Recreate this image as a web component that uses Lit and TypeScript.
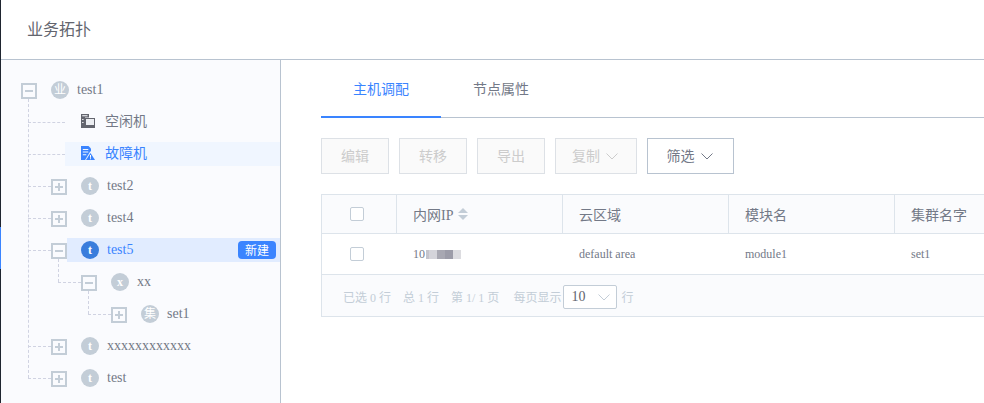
import { LitElement, html, css, svg } from "lit";
import { customElement } from "lit/decorators.js";

type Node = { depth: number; label: string; glyph?: string; toggle?: "plus" | "minus"; leaf?: "idle" | "fault"; state?: "active" | "fault" };

const NODES: Node[] = [
  { depth: 0, label: "test1", glyph: "业", toggle: "minus" },
  { depth: 1, label: "空闲机", leaf: "idle" },
  { depth: 1, label: "故障机", leaf: "fault", state: "fault" },
  { depth: 1, label: "test2", glyph: "t", toggle: "plus" },
  { depth: 1, label: "test4", glyph: "t", toggle: "plus" },
  { depth: 1, label: "test5", glyph: "t", toggle: "minus", state: "active" },
  { depth: 2, label: "xx", glyph: "x", toggle: "minus" },
  { depth: 3, label: "set1", glyph: "集", toggle: "plus" },
  { depth: 1, label: "xxxxxxxxxxxx", glyph: "t", toggle: "plus" },
  { depth: 1, label: "test", glyph: "t", toggle: "plus" },
];

// connector segments, relative to the tree origin: [left, top, length]
const V: [number, number, number][] = [
  [27, 25, 279],
  [57, 185, 23],
  [87, 217, 23],
];
const H: [number, number, number][] = [
  [27, 48, 37],
  [27, 80, 37],
  [27, 112, 23],
  [27, 144, 23],
  [27, 176, 23],
  [57, 208, 23],
  [87, 240, 23],
  [27, 272, 23],
  [27, 304, 23],
];

const idleIcon = svg`<svg width="14" height="14" viewBox="0 0 14 14"><path fill="#63656e" d="M0 0h8v3.500H4V14H0z"/><path fill="#fafbfe" d="M1.200 1.300h5.300v1H1.200zM1.200 5h1.300v1H1.200zM1.200 8h1.300v1H1.200z"/><path fill="#63656e" d="M4 4h10v10H4z"/><path fill="#eceef2" d="M5 5h8v6H5z"/></svg>`;
const faultIcon = svg`<svg width="14" height="14" viewBox="0 0 14 14"><path fill="#3a84ff" d="M0 0h7.500L10 2.500V14H0z"/><path fill="#f0f6ff" d="M1.800 3h5.500v1H1.800zM1.800 5.600h5.500v1H1.800zM1.800 8.200h3.500v1H1.800z"/><path fill="#f0f6ff" d="M9.500 5 15 15H3.500z"/><path fill="#3a84ff" d="M9.500 7 14 14H5z"/><path fill="#fff" d="M9 9h1v2.700H9zM9 12.300h1v1H9z"/></svg>`;
const chevron = svg`<svg width="12" height="7" viewBox="0 0 12 7"><path d="M.5.500l5.500 5.500 5.500-5.500" fill="none" stroke="currentColor" stroke-width="1"/></svg>`;

@customElement("app-root")
export class AppRoot extends LitElement {
  static styles = css`
    :host { display: flex; width: 984px; height: 403px; overflow: hidden; background: #fff; font-family: "Liberation Serif", "Noto Sans CJK SC", serif; color: #737987; font-size: 14px; }
    .rail { width: 1px; flex: none; background: #1f2530; }
    .rail i { display: block; margin-top: 227px; height: 42px; background: #3a84ff; }
    .page { flex: 1; min-width: 0; display: flex; flex-direction: column; }
    .title { height: 59px; flex: none; box-sizing: border-box; padding: 0 0 3px 26px; display: flex; align-items: center; font-size: 16px; color: #63656e; }
    .body { flex: 1; min-height: 0; display: flex; border-top: 1px solid #b8c3d0; }
    .side { width: 279px; flex: none; background: #fafbfe; border-right: 1px solid #b8c3d0; padding-top: 14px; }
    .tree { position: relative; }
    .v { position: absolute; width: 0; border-left: 1px dashed #d0d3e2; }
    .h { position: absolute; height: 0; border-top: 1px dashed #d0d3e2; }
    .row { position: relative; height: 32px; display: flex; align-items: center; }
    .toggle { position: absolute; z-index: 1; width: 16px; height: 16px; box-sizing: border-box; border: 2px solid #c3cdd7; top: 9px; background: #fafbfe; }
    .toggle::before { content: ""; position: absolute; left: 2px; right: 2px; top: 5px; height: 2px; background: #c3cdd7; }
    .toggle.plus::after { content: ""; position: absolute; top: 2px; bottom: 2px; left: 5px; width: 2px; background: #c3cdd7; }
    .band { position: absolute; top: 4px; bottom: 4px; right: 0; }
    .band.active { background: #e1ecff; }
    .band.fault { background: #f0f6ff; }
    .content { position: relative; display: flex; align-items: center; height: 18px; }
    .dot { width: 18px; height: 18px; border-radius: 50%; background: #c3cdd7; color: #fff; font-size: 12px; display: flex; align-items: center; justify-content: center; margin-right: 8px; line-height: 1; }
    .dot.latin { font-weight: 700; }
    .leaf { display: flex; width: 24px; height: 14px; margin-top: -2px; }
    .label.cjk { margin-top: -4px; }
    .row.active .dot { background: #3a7ddc; }
    .row.active .label, .row.fault .label { color: #3a84ff; }
    .badge { position: absolute; right: 4px; top: 7px; width: 38px; height: 18px; border-radius: 4px; background: #3a84ff; color: #fff; font-size: 12px; display: flex; align-items: center; justify-content: center; }
    .main { flex: 1; min-width: 0; padding-left: 40px; overflow: hidden; }
    .tabs { display: flex; height: 58px; border-bottom: 1px solid #b8c3d0; box-sizing: border-box; }
    .tab { width: 120px; padding-top: 21px; box-sizing: border-box; text-align: center; line-height: 18px; height: 58px; }
    .tab.on { color: #3a84ff; border-bottom: 2px solid #3a84ff; }
    .btns { display: flex; gap: 10px; margin-top: 20px; }
    .btn { height: 36px; width: 68px; box-sizing: border-box; border: 1px solid #dde1e6; background: #fafafa; color: #cccccc; display: flex; align-items: center; justify-content: center; gap: 6px; padding-bottom: 2px; }
    .btn svg { margin-top: 3px; }
    .btn.w { width: 82px; padding-right: 2px; }
    .btn.on { width: 87px; background: #fff; border-color: #b8c3d0; color: #737987; padding-right: 2px; }
    .table { width: 828px; margin-top: 20px; border: 1px solid #dde4eb; box-sizing: border-box; }
    .tr { display: grid; grid-template-columns: 75px 166px 166px 166px 1fr; align-items: stretch; box-sizing: border-box; }
    .thead { height: 39px; background: #fafbfd; border-bottom: 1px solid #dde4eb; }
    .thead > div { display: flex; align-items: center; padding-left: 16px; border-right: 1px solid #dde4eb; }
    .tbody { height: 41px; border-bottom: 1px solid #dde4eb; font-size: 12px; }
    .tbody > div { display: flex; align-items: center; padding-left: 16px; }
    .tr > .c { padding-left: 28px; }
    .check { width: 14px; height: 14px; box-sizing: border-box; border: 1px solid #c3cdd7; border-radius: 2px; background: #fff; }
    .sort { display: inline-flex; flex-direction: column; gap: 2px; margin-left: 5px; }
    .sort i { display: block; width: 0; height: 0; border-left: 5px solid transparent; border-right: 5px solid transparent; }
    .sort i:first-child { border-bottom: 5px solid #c3cdd7; }
    .sort i:last-child { border-top: 5px solid #c3cdd7; }
    .mask { display: flex; margin-left: 1px; height: 9px; }
    .mask i { display: block; height: 9px; }
    .foot { height: 41px; box-sizing: border-box; background: #fafbfd; display: flex; align-items: center; padding: 3px 0 0 21px; color: #c3cdd7; font-size: 12px; }
    .foot span { margin-right: 12px; }
    .foot span.ps { margin: 0 2px 0 2px; }
    .sel { width: 54px; height: 24px; box-sizing: border-box; border: 1px solid #c3cdd7; border-radius: 2px; background: #fff; color: #63656e; font-size: 14px; display: flex; align-items: center; justify-content: space-between; padding: 0 6px 0 7px; margin-right: 4px; }
    .sel svg { color: #c3cdd7; }
  `;

  private renderRow(n: Node) {
    const toggleLeft = 20 + n.depth * 30;
    const iconLeft = 50 + n.depth * 30;
    const bandLeft = n.state === "active" ? 66 : 64;
    return html`<div class="row ${n.state ?? ""}">
      ${n.state ? html`<div class="band ${n.state}" style="left:${bandLeft}px"></div>` : null}
      ${n.toggle ? html`<div class="toggle ${n.toggle}" style="left:${toggleLeft}px"></div>` : null}
      <div class="content" style="margin-left:${iconLeft}px">
        ${n.leaf
          ? html`<span class="leaf">${n.leaf === "idle" ? idleIcon : faultIcon}</span>`
          : html`<span class="dot ${/[a-z]/.test(n.glyph ?? "") ? "latin" : ""}">${n.glyph}</span>`}
        <span class="label ${n.leaf ? "cjk" : ""}">${n.label}</span>
      </div>
      ${n.state === "active" ? html`<span class="badge">新建</span>` : null}
    </div>`;
  }

  render() {
    return html`
      <div class="rail"><i></i></div>
      <div class="page">
        <div class="title">业务拓扑</div>
        <div class="body">
          <aside class="side">
            <div class="tree">
              ${NODES.map((n) => this.renderRow(n))}
              ${V.map(([l, t, h]) => html`<span class="v" style="left:${l}px;top:${t}px;height:${h}px"></span>`)}
              ${H.map(([l, t, w]) => html`<span class="h" style="left:${l}px;top:${t}px;width:${w}px"></span>`)}
            </div>
          </aside>
          <main class="main">
            <div class="tabs">
              <div class="tab on">主机调配</div>
              <div class="tab">节点属性</div>
            </div>
            <div class="btns">
              <div class="btn">编辑</div>
              <div class="btn">转移</div>
              <div class="btn">导出</div>
              <div class="btn w">复制 ${chevron}</div>
              <div class="btn on">筛选 ${chevron}</div>
            </div>
            <div class="table">
              <div class="tr thead">
                <div class="c"><span class="check"></span></div>
                <div>内网IP<span class="sort"><i></i><i></i></span></div>
                <div>云区域</div>
                <div>模块名</div>
                <div>集群名字</div>
              </div>
              <div class="tr tbody">
                <div class="c"><span class="check"></span></div>
                <div>10<span class="mask">
                  <i style="width:3px;background:#c4c4cc"></i>
                  <i style="width:8px;background:#d4d4da"></i><i style="width:8px;background:#a8a8b2"></i>
                  <i style="width:8px;background:#9c9ca8"></i><i style="width:8px;background:#dcdce0"></i></span></div>
                <div>default area</div>
                <div>module1</div>
                <div>set1</div>
              </div>
              <div class="foot">
                <span>已选 0 行</span><span>总 1 行</span><span>第 1/ 1 页</span><span class="ps">每页显示</span>
                <div class="sel">10 ${chevron}</div>行
              </div>
            </div>
          </main>
        </div>
      </div>`;
  }
}
